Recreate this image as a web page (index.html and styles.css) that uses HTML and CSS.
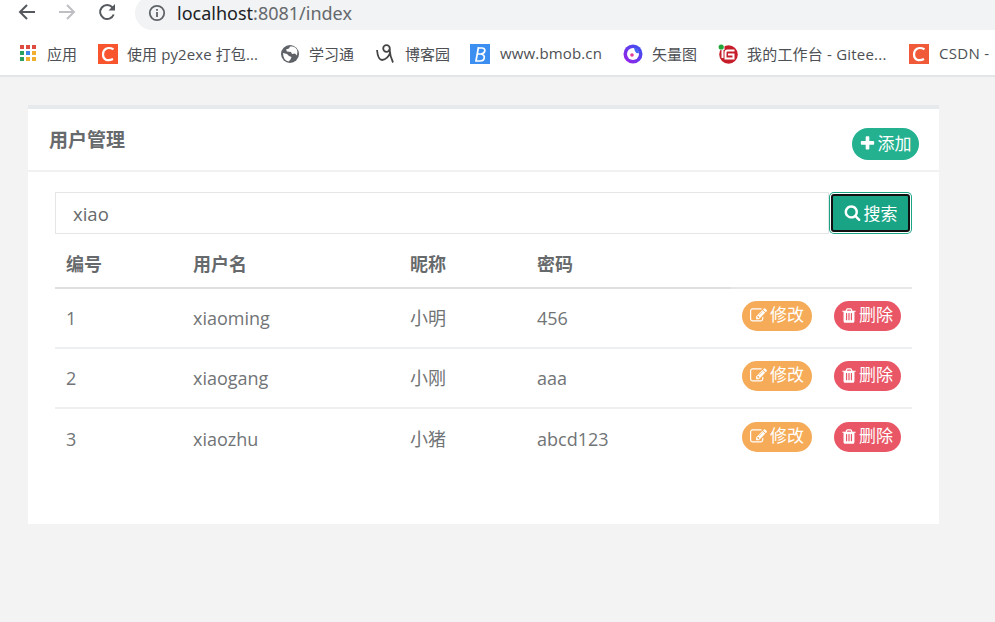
FILE: index.html
```html
<!DOCTYPE html>
<html lang="zh-CN">
<head>
  <meta charset="UTF-8">
  <meta name="viewport" content="width=device-width, initial-scale=1.0">
  <title>用户管理</title>
  <link rel="stylesheet" href="styles.css">
</head>
<body>
  <!-- icons -->
  <svg class="icon-defs" width="0" height="0">
    <symbol id="plus" viewBox="0 0 1792 1792"><path d="M1600 736v192q0 40-28 68t-68 28h-416v416q0 40-28 68t-68 28h-192q-40 0-68-28t-28-68v-416h-416q-40 0-68-28t-28-68v-192q0-40 28-68t68-28h416v-416q0-40 28-68t68-28h192q40 0 68 28t28 68v416h416q40 0 68 28t28 68z"/></symbol>
    <symbol id="search" viewBox="0 0 1792 1792"><path d="M1216 832q0-185-131.500-316.500t-316.500-131.500-316.500 131.500-131.500 316.500 131.500 316.500 316.500 131.500 316.500-131.500 131.500-316.500zm512 832q0 52-38 90t-90 38q-54 0-90-38l-343-342q-179 124-399 124-143 0-273.500-55.500t-225-150-150-225-55.500-273.500 55.500-273.500 150-225 225-150 273.500-55.500 273.500 55.500 225 150 150 225 55.500 273.500q0 220-124 399l343 343q37 37 37 90z"/></symbol>
    <symbol id="edit" viewBox="0 0 1792 1792"><path d="M888 1184l116-116-152-152-116 116v56h96v96h56zm440-720q-16-16-33 1l-350 350q-17 17-1 33t33-1l350-350q17-17 1-33zm80 594v190q0 119-84.500 203.500t-203.500 84.500h-832q-119 0-203.500-84.500t-84.500-203.500v-832q0-119 84.500-203.500t203.500-84.500h832q63 0 117 25 15 7 18 23 3 17-9 29l-49 49q-14 14-32 8-23-6-45-6h-832q-66 0-113 47t-47 113v832q0 66 47 113t113 47h832q66 0 113-47t47-113v-126q0-13 9-22l64-64q15-15 35-7t20 29zm-96-738l288 288-672 672h-288v-288zm444 132l-92 92-288-288 92-92q28-28 68-28t68 28l152 152q28 28 28 68t-28 68z"/></symbol>
    <symbol id="trash" viewBox="192 0 1408 1792"><path d="M704 1376v-704q0-14-9-23t-23-9h-64q-14 0-23 9t-9 23v704q0 14 9 23t23 9h64q14 0 23-9t9-23zm256 0v-704q0-14-9-23t-23-9h-64q-14 0-23 9t-9 23v704q0 14 9 23t23 9h64q14 0 23-9t9-23zm256 0v-704q0-14-9-23t-23-9h-64q-14 0-23 9t-9 23v704q0 14 9 23t23 9h64q14 0 23-9t9-23zm-544-992h448l-48-117q-7-9-17-11h-317q-10 2-17 11zm928 32v64q0 14-9 23t-23 9h-96v948q0 83-47 143.500t-113 60.500h-832q-66 0-113-58.500t-47-141.500v-952h-96q-14 0-23-9t-9-23v-64q0-14 9-23t23-9h309l70-167q15-37 54-63t79-26h320q40 0 79 26t54 63l70 167h309q14 0 23 9t9 23z"/></symbol>
  </svg>

  <header class="browser">
    <div class="toolbar">
      <svg class="nav-icon" viewBox="0 0 20 20"><path d="M18 10H3M10 3L3 10l7 7"/></svg>
      <svg class="nav-icon disabled" viewBox="0 0 20 20"><path d="M2 10h15M10 3l7 7-7 7"/></svg>
      <svg class="nav-icon" viewBox="0 0 20 20"><path d="M16.700 12.500A7 7 0 1 1 15.500 5.500L17 7"/><path class="solid" d="M18 2v6.500h-6.500z"/></svg>
      <div class="address">
        <svg class="info" viewBox="0 0 18 18"><circle cx="9" cy="9" r="7.200"/><path d="M9 8v5M9 5v1.800"/></svg>
        <span class="url"><b>localhost</b>:8081/index</span>
      </div>
    </div>
    <nav class="bookmarks">
      <a class="bm bm-apps"><svg viewBox="0 0 20 20">
        <path fill="#dd4b41" d="M2 1h4v4H2zM8 1h4v4H8zM14 1h4v4h-4z"/>
        <path fill="#2ba160" d="M2 7h4v4H2zM2 13h4v4H2z"/>
        <path fill="#4285e8" d="M8 7h4v4H8z"/>
        <path fill="#f2ae2e" d="M14 7h4v4h-4zM8 13h4v4H8zM14 13h4v4h-4z"/>
      </svg><span>应用</span></a>
      <a class="bm bm-py"><svg viewBox="0 0 20 20"><path fill="#f8552f" d="M0 0h20v20H0z"/><path class="c-mark" d="M15.500 5.300C9.500 2.200 5 5 5 10.500c0 5.200 4.500 7 10 4.600"/></svg><span>使用 py2exe 打包...</span></a>
      <a class="bm bm-xxt"><svg viewBox="0 0 20 20"><circle cx="10" cy="10" r="9" fill="#5f6368"/><path fill="#fff" d="M3 9l4 1 2 2 2.500 1-1 2.500-2 2Q3 16 3 9zM10 2.500l-1 2-3 1 1 2 4 .5 1 2 3-.500 2 2q2-7-4-9z"/></svg><span>学习通</span></a>
      <a class="bm bm-cnblogs"><svg viewBox="0 0 20 20"><path class="ink" d="M1 6q1 10 5 10 6-1 8-7M13.500 5q.500 7 3.500 13.500"/><circle class="ink" cx="10.500" cy="4.500" r="3.300"/></svg><span>博客园</span></a>
      <a class="bm bm-bmob"><svg viewBox="0 0 20 20"><path fill="#3c8ff0" d="M0 0h20v20H0z"/><path class="b-mark" d="M8.500 3L6 17h4c5 0 6-6 1-7 5-1 5-6 1-6H8M8 10h3"/></svg><span>www.bmob.cn</span></a>
      <a class="bm bm-vector"><svg viewBox="0 0 20 20">
        <defs><linearGradient id="ring" x1="0" y1="1" x2="1" y2="0"><stop offset="0" stop-color="#a11de8"/><stop offset="1" stop-color="#3156f0"/></linearGradient></defs>
        <circle cx="10" cy="10" r="9.500" fill="url(#ring)"/><circle cx="10" cy="10" r="6" fill="#fff"/><path fill="#4468f3" d="M11 3.500A6.500 6.500 0 0 1 16 9q-4 1.500-5-5.500z"/><circle cx="9" cy="11" r="1.800" fill="#e33c98"/>
      </svg><span>矢量图</span></a>
      <a class="bm bm-gitee"><svg viewBox="0 0 20 20"><circle cx="10.500" cy="10.500" r="9.300" fill="#c71d2b"/><path fill="#fff" d="M0 0h6.500v6H0z"/><path class="g-mark" d="M16.500 6.500H9.500Q7.500 6.500 7.500 8.500v6h8v-4H10M4.500 6v8"/><circle cx="3.200" cy="3" r="2.600" fill="#22a63a"/></svg><span>我的工作台 - Gitee...</span></a>
      <a class="bm bm-csdn"><svg viewBox="0 0 20 20"><path fill="#f05a38" d="M0 0h20v20H0z"/><path class="c-mark" d="M15.500 5.300C9.500 2.200 5 5 5 10.500c0 5.200 4.500 7 10 4.600"/></svg><span>CSDN -</span></a>
    </nav>
  </header>

  <main class="panel">
    <div class="panel-title">
      <h5>用户管理</h5>
      <button type="button" class="btn btn-add"><svg><use href="#plus"/></svg>添加</button>
    </div>
    <div class="panel-content">
      <form class="search-form">
        <input type="text" class="search-input" value="xiao">
        <button type="button" class="btn-search"><svg><use href="#search"/></svg>搜索</button>
      </form>
      <table class="user-table">
        <colgroup>
          <col class="col-id"><col class="col-name"><col class="col-nick"><col class="col-pwd"><col>
        </colgroup>
        <thead>
          <tr><th>编号</th><th>用户名</th><th>昵称</th><th>密码</th><td></td></tr>
        </thead>
        <tbody>
          <tr>
            <td>1</td><td>xiaoming</td><td>小明</td><td>456</td>
            <td><div class="actions">
              <button type="button" class="btn btn-edit"><svg><use href="#edit"/></svg>修改</button>
              <button type="button" class="btn btn-delete"><svg><use href="#trash"/></svg>删除</button>
            </div></td>
          </tr>
          <tr>
            <td>2</td><td>xiaogang</td><td>小刚</td><td>aaa</td>
            <td><div class="actions">
              <button type="button" class="btn btn-edit"><svg><use href="#edit"/></svg>修改</button>
              <button type="button" class="btn btn-delete"><svg><use href="#trash"/></svg>删除</button>
            </div></td>
          </tr>
          <tr>
            <td>3</td><td>xiaozhu</td><td>小猪</td><td>abcd123</td>
            <td><div class="actions">
              <button type="button" class="btn btn-edit"><svg><use href="#edit"/></svg>修改</button>
              <button type="button" class="btn btn-delete"><svg><use href="#trash"/></svg>删除</button>
            </div></td>
          </tr>
        </tbody>
      </table>
    </div>
  </main>
</body>
</html>
```
FILE: styles.css
```css
* {
  box-sizing: border-box;
}

body {
  margin: 0;
  height: 622px;
  overflow: hidden;
  background-color: #f3f3f4;
  color: #676a6c;
  font-family: "Open Sans", "Noto Sans CJK SC", sans-serif;
  font-size: 18px;
}

button, input {
  font-family: inherit;
  color: inherit;
}

.icon-defs {
  display: block;
}

/* browser bar */
.browser {
  height: 77px;
  background-color: #fff;
  border-bottom: 2px solid #e4e5e7;
  overflow: hidden;
}

.toolbar {
  display: flex;
  height: 30px;
  padding-left: 17px;
}

.nav-icon {
  flex: none;
  width: 20px;
  height: 20px;
  margin: 2px 20px 0 0;
  fill: none;
  stroke: #55585c;
  stroke-width: 2;
}

.nav-icon.disabled {
  stroke: #bdbfc2;
}

.nav-icon .solid {
  fill: #55585c;
  stroke: none;
}

.address {
  display: flex;
  flex: 1;
  height: 34px;
  margin: -4px 0 0 -2px;
  padding-left: 13px;
  background-color: #f1f3f4;
  border-radius: 17px 0 0 17px;
}

.info {
  width: 18px;
  height: 18px;
  margin: 8px 11px 0 0;
  fill: none;
  stroke: #5f6368;
  stroke-width: 1.8;
}

.url {
  font-family: "Noto Sans", sans-serif;
  font-size: 18px;
  line-height: 34px;
  color: #65696d;
}

.url b {
  font-weight: normal;
  color: #202124;
}

.bookmarks {
  display: flex;
  height: 45px;
  padding-left: 18px;
  color: #4d5054;
  font-size: 15px;
  white-space: nowrap;
}

.bm {
  display: flex;
  flex: none;
  align-items: center;
  gap: 9px;
  height: 47px;
}

.bm span {
  margin-top: -1px;
}

.bm svg {
  flex: none;
  width: 20px;
  height: 20px;
}

.bm-apps { width: 80px; }
.bm-py { width: 182px; letter-spacing: 0.1px; }
.bm-xxt { width: 96px; }
.bm-cnblogs { width: 94px; }
.bm-bmob { width: 153px; gap: 10px; letter-spacing: 0.15px; }
.bm-vector { width: 95px; }
.bm-gitee { width: 191px; letter-spacing: 0.2px; }
.bm-csdn { gap: 10px; letter-spacing: 0.3px; }

.c-mark, .b-mark, .g-mark, .ink {
  fill: none;
  stroke: #fff;
  stroke-width: 2.2;
}

.b-mark {
  stroke-width: 1.7;
}

.g-mark {
  stroke-width: 2;
}

.ink {
  stroke: #444;
  stroke-width: 1.8;
}

/* panel */
.panel {
  width: 911px;
  height: 419px;
  margin: 28px 0 0 28px;
  background-color: #fff;
  border-top: 4px solid #e7eaec;
}

.panel-title {
  display: flex;
  justify-content: space-between;
  height: 63px;
  padding: 19px 20px 0 21px;
  border-bottom: 2px solid #f0f1f2;
}

.panel-title h5 {
  margin: 0;
  font-size: 19px;
  font-weight: bold;
  line-height: 25px;
}

.panel-content {
  padding: 20px 27px 0;
}

.btn {
  display: flex;
  align-items: center;
  justify-content: center;
  gap: 3px;
  height: 30px;
  padding: 0 0 1px;
  border: 0;
  border-radius: 15px;
  color: #fff;
  font-size: 17px;
  line-height: 24px;
}

.btn svg, .btn-search svg {
  flex: none;
  width: 17px;
  height: 17px;
  fill: currentColor;
}

.btn-add {
  gap: 2px;
  width: 67px;
  height: 32px;
  padding-right: 1px;
  border-radius: 16px;
  background-color: #23b18f;
}

.btn-edit {
  width: 70px;
  background-color: #f5ab58;
}

.btn-delete {
  width: 67px;
  background-color: #e95767;
}

.btn-delete svg {
  width: 14px;
}

.search-form {
  display: flex;
  height: 42px;
}

.search-input {
  flex: 1;
  padding: 1px 17px 0;
  border: 1px solid #e5e6e7;
  font-size: 18.5px;
  outline: none;
}

/* focused button: dark ring with a white edge */
.btn-search {
  display: flex;
  align-items: center;
  justify-content: center;
  gap: 3px;
  width: 79px;
  margin: 2px;
  padding: 0 0 2px;
  border: 2px solid #101010;
  border-radius: 3px;
  background-color: #1aa486;
  box-shadow: 0 0 0 1px #fff, 0 0 0 2px #1aa486;
  color: #fff;
  font-size: 17px;
}

.user-table {
  width: 857px;
  table-layout: fixed;
  border-collapse: separate;
  border-spacing: 0;
}

.col-id { width: 127px; }
.col-name { width: 217px; }
.col-nick { width: 127px; }
.col-pwd { width: 205px; }

.user-table th, .user-table td {
  padding: 0 11px;
  text-align: left;
  vertical-align: middle;
  line-height: 24px;
}

.user-table thead tr {
  height: 55px;
}

.user-table thead th {
  padding-top: 6px;
  border-bottom: 2px solid #dddfe0;
}

.user-table thead td {
  border-bottom: 2px solid #e5e7e8;
}

.user-table tbody td {
  height: 60px;
  border-bottom: 2px solid #eeeff0;
  color: #717476;
}

.user-table tbody tr:last-child td {
  border-bottom: 0;
}

.actions {
  display: flex;
  gap: 22px;
  margin-top: -5px;
}
```
